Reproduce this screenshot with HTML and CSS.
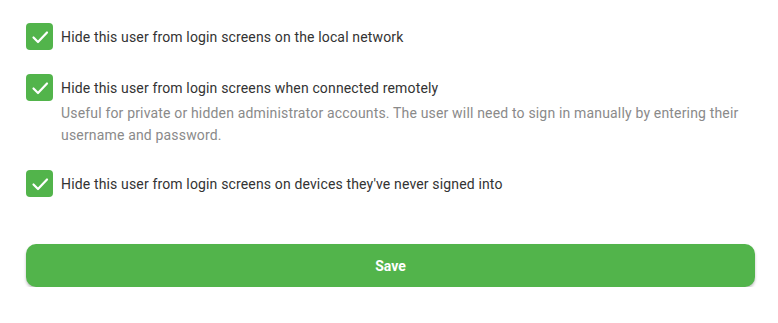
FILE: index.html
```html
<!DOCTYPE html>
<html>
<head>
    <link rel="stylesheet" href="styles.css">
</head>
<body>
    <div class="settings">
        <div class="option">
            <label class="option-row">
                <span class="check">
                    <svg width="18" height="18" viewBox="0 0 18 18"><path d="M2.5 9.5 L7 14 L16 4.5" fill="none" stroke="#fff" stroke-width="2.2" stroke-linecap="round" stroke-linejoin="round"/></svg>
                </span>
                <span class="option-label">Hide this user from login screens on the local network</span>
            </label>
        </div>
        <div class="option">
            <label class="option-row">
                <span class="check">
                    <svg width="18" height="18" viewBox="0 0 18 18"><path d="M2.5 9.5 L7 14 L16 4.5" fill="none" stroke="#fff" stroke-width="2.2" stroke-linecap="round" stroke-linejoin="round"/></svg>
                </span>
                <span class="option-label">Hide this user from login screens when connected remotely</span>
            </label>
            <p class="option-desc">Useful for private or hidden administrator accounts. The user will need to sign in manually by entering their username and password.</p>
        </div>
        <div class="option">
            <label class="option-row">
                <span class="check">
                    <svg width="18" height="18" viewBox="0 0 18 18"><path d="M2.5 9.5 L7 14 L16 4.5" fill="none" stroke="#fff" stroke-width="2.2" stroke-linecap="round" stroke-linejoin="round"/></svg>
                </span>
                <span class="option-label">Hide this user from login screens on devices they've never signed into</span>
            </label>
        </div>
        <button class="save-btn">Save</button>
    </div>
</body>
</html>
```

FILE: styles.css
```css
body {
    margin: 0;
    background: #fff;
    font-family: Roboto, "Liberation Sans", sans-serif;
}

.settings {
    padding: 23px 23px 0 26px;
    display: flex;
    flex-direction: column;
}

.option {
    margin-bottom: 24px;
}

.option-row {
    display: flex;
    align-items: center;
    gap: 8px;
}

.check {
    width: 27px;
    height: 27px;
    border-radius: 4px;
    background: #52b44b;
    display: flex;
    align-items: center;
    justify-content: center;
    flex-shrink: 0;
}

.option-label {
    font-size: 14px;
    letter-spacing: 0.15px;
    color: #333;
}

.option-desc {
    margin: 1px 0 0 35px;
    font-size: 14px;
    line-height: 22px;
    letter-spacing: 0.17px;
    color: #8a8a8a;
}

.save-btn {
    margin-top: 23px;
    height: 43px;
    border: none;
    border-radius: 10px;
    background: #52b44b;
    color: #fff;
    font-family: Roboto, "Liberation Sans", sans-serif;
    font-weight: bold;
    font-size: 14px;
    box-shadow: 0 2px 3px rgba(0,0,0,0.25);
}
```
